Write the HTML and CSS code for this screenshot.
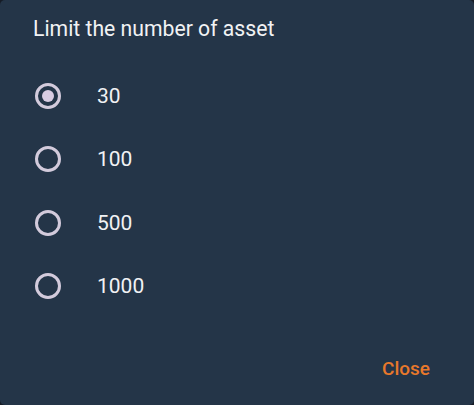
FILE: index.html
```html
<!DOCTYPE html>
<html lang="en">
<head>
    <meta charset="UTF-8">
    <meta name="viewport" content="width=device-width, initial-scale=1.0">
    <title>Limit the number of asset</title>
    <link rel="stylesheet" href="styles.css">
</head>
<body>

<div class="dialog">
    <h2 class="dialog-title">Limit the number of asset</h2>
    <ul class="options">
        <li class="option checked"><span class="radio"></span><span class="label">30</span></li>
        <li class="option"><span class="radio"></span><span class="label">100</span></li>
        <li class="option"><span class="radio"></span><span class="label">500</span></li>
        <li class="option"><span class="radio"></span><span class="label">1000</span></li>
    </ul>
    <div class="dialog-actions">
        <button class="text-button">Close</button>
    </div>
</div>

</body>
</html>
```

FILE: styles.css
```css
body {
    margin: 0;
    padding: 0;
    background: #161c26;
    font-family: Roboto, 'Noto Sans', Arial, sans-serif;
    color: #eef0f3;
}
.dialog {
    width: 474px;
    height: 405px;
    box-sizing: border-box;
    background-color: #243548;
    border-radius: 5px;
    overflow: hidden;
}
.dialog-title {
    margin: 0;
    padding: 17px 24px 0 33px;
    font-size: 21.2px;
    font-weight: 400;
    line-height: 24px;
    color: #f1f2f4;
}
.options {
    list-style: none;
    margin: 23px 0 0;
    padding: 0;
}
.option {
    display: flex;
    align-items: center;
    height: 63.5px;
    padding-left: 35px;
}
.radio {
    position: relative;
    width: 20px;
    height: 20px;
    border: 3px solid #d3cbdc;
    border-radius: 50%;
    flex-shrink: 0;
}
.checked .radio::after {
    content: '';
    position: absolute;
    top: 4px;
    left: 4px;
    width: 12px;
    height: 12px;
    border-radius: 50%;
    background-color: #d9cde3;
}
.label {
    margin-left: 36px;
    font-size: 21px;
    color: #f1f2f4;
}
.dialog-actions {
    display: flex;
    justify-content: flex-end;
    margin-top: 32px;
    padding-right: 36px;
}
.text-button {
    height: 36px;
    padding: 0 8px;
    border: none;
    background: none;
    font-family: inherit;
    font-size: 19px;
    font-weight: 500;
    color: #e8782b;
    cursor: pointer;
}
```
